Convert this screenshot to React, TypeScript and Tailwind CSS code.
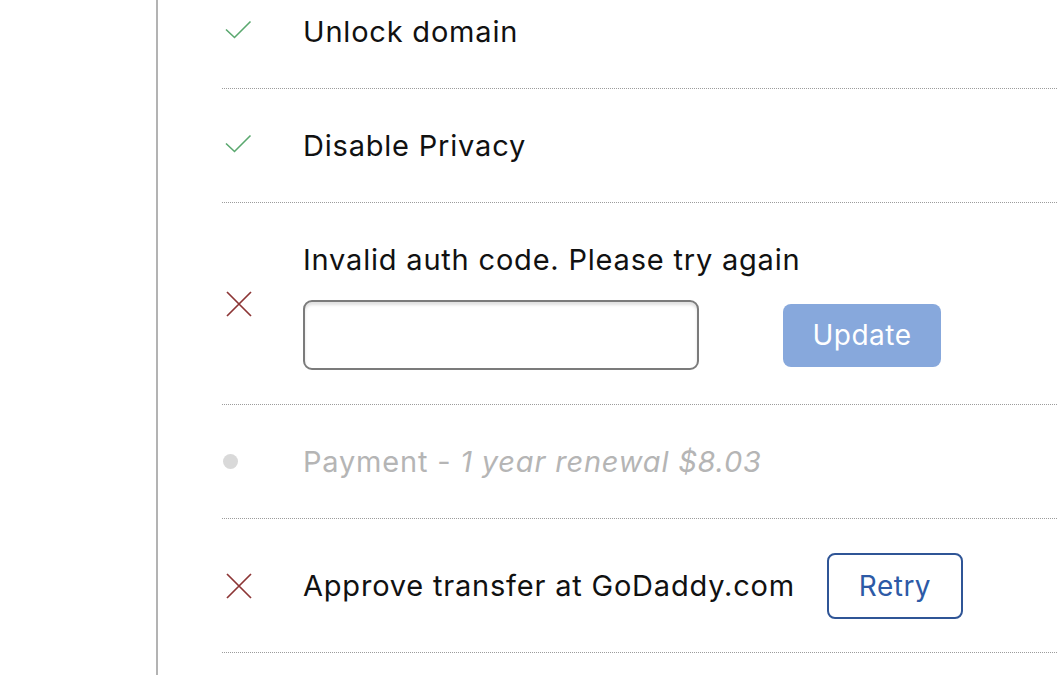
import React from 'react';

const font = { fontFamily: 'Inter, "Liberation Sans", Arial, sans-serif' };

const Check = () => (
  <svg width="28" height="20" viewBox="0 0 28 20" className="ml-[2px] -mt-[3px]">
    <path d="M2 9.5 L10.5 17.5 L26.5 1.5" fill="none" stroke="#5aa86f" strokeWidth="1.6" />
  </svg>
);

const Cross = () => (
  <svg width="28" height="28" viewBox="0 0 28 28" className="ml-[2px]">
    <path d="M3 2 L27 26 M27 2 L3 26" fill="none" stroke="#8c3535" strokeWidth="1.7" />
  </svg>
);

const Dot = () => <div className="ml-[1px] h-[15px] w-[15px] rounded-full bg-[#d9d9d9]" />;

type RowProps = { icon: React.ReactNode; children: React.ReactNode; className?: string };

const Row = ({ icon, children, className = '' }: RowProps) => (
  <div className={`flex items-center border-b border-dotted border-[#9c9c9c] ${className}`}>
    <div className="flex w-[81px] shrink-0 items-center">{icon}</div>
    <div className="flex-1">{children}</div>
  </div>
);

const App: React.FC = () => {
  return (
    <div
      className="flex h-[675px] w-full overflow-hidden bg-white text-[29px] leading-[34px] tracking-[0.8px] text-[#111]"
      style={font}
    >
      <div className="w-[156px] shrink-0" />
      <div className="w-[2px] shrink-0 bg-[#b3b3b3]" />
      <div className="ml-[64px] flex-1">
        <div className="-mt-[25px]">
          <Row icon={<Check />} className="h-[114px]">
            <span>Unlock domain</span>
          </Row>
          <Row icon={<Check />} className="h-[114px]">
            <span>Disable Privacy</span>
          </Row>
          <Row icon={<div className="-mt-[6px]"><Cross /></div>} className="pt-[40px] pb-[34px]">
            <div>Invalid auth code. Please try again</div>
            <div className="mt-[23px] flex items-center">
              <input
                className="h-[70px] w-[396px] rounded-[9px] border-2 border-[#7b7b7b] bg-white px-3 shadow-[inset_0_3px_3px_rgba(0,0,0,0.12)] outline-none"
                type="text"
              />
              <button className="ml-[84px] h-[63px] w-[158px] rounded-[8px] bg-[#87a8dc] text-[28px] tracking-[0.5px] text-white">
                Update
              </button>
            </div>
          </Row>
          <Row icon={<Dot />} className="h-[114px]">
            <span className="text-[#b5b5b5]">
              Payment - <i>1 year renewal $8.03</i>
            </span>
          </Row>
          <Row icon={<Cross />} className="h-[134px]">
            <div className="flex items-center">
              <span>Approve transfer at GoDaddy.com</span>
              <button className="ml-[32px] h-[66px] w-[136px] rounded-[8px] border-2 border-[#2f5596] text-[28px] tracking-[0.5px] text-[#2d5aa6]">
                Retry
              </button>
            </div>
          </Row>
        </div>
      </div>
    </div>
  );
};

export default App;
